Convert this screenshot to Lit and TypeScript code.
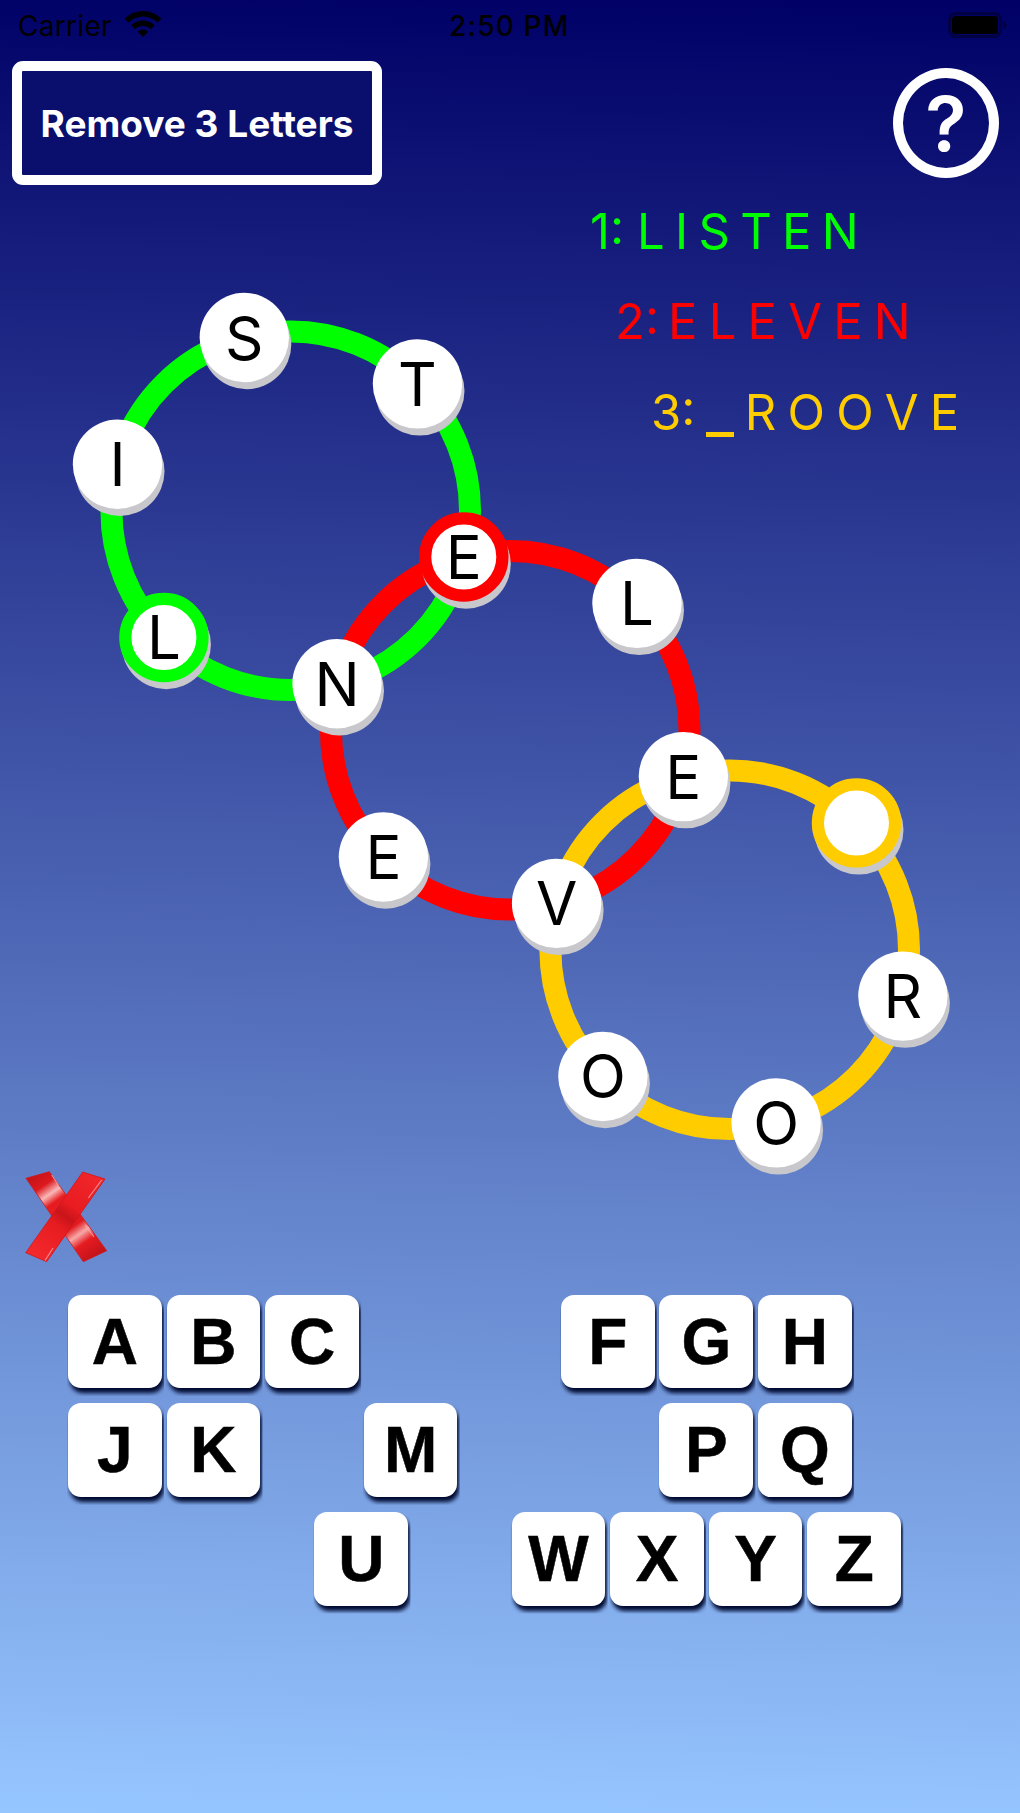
import { LitElement, html, css, svg } from "lit";
import { customElement } from "lit/decorators.js";

const R = 179.3;
type Ring = { cx: number; cy: number; color: string; letters: string[] };
const rings: Ring[] = [
  { cx: 290.7, cy: 510.7, color: "#00ff00", letters: ["S", "T", "", "", "L", "I"] },
  { cx: 510.2, cy: 730.2, color: "#ff0000", letters: ["E", "L", "E", "V", "E", "N"] },
  { cx: 729.7, cy: 949.7, color: "#ffcc00", letters: ["", "", "R", "O", "O", ""] },
];

type Node = { x: number; y: number; letter: string; ring?: string };
function pos(r: Ring, i: number) {
  const a = ((-15 + 60 * i) * Math.PI) / 180;
  return { x: r.cx + R * Math.sin(a), y: r.cy - R * Math.cos(a) };
}
const nodes: Node[] = [];
rings.forEach((r, ri) => {
  r.letters.forEach((l, i) => {
    if (l) nodes.push({ ...pos(r, i), letter: l, ring: ri === 0 && l === "L" ? "#00ff00" : ri === 1 && i === 0 ? "#ff0000" : undefined });
  });
});
nodes.push({ ...pos(rings[2], 1), letter: "", ring: "#ffcc00" });

function band(r1: number, r2: number) {
  const cx = 18, cy = 26, s = Math.SQRT1_2;
  const p = (r: number, d: number) => `${(cx + d * r * s).toFixed(2)} ${(cy - r * s).toFixed(2)}`;
  if (r2 === 0) return `M${cx} ${cy}L${p(r1, -1)}A${r1} ${r1} 0 0 1 ${p(r1, 1)}Z`;
  return `M${p(r1, -1)}A${r1} ${r1} 0 0 1 ${p(r1, 1)}L${p(r2, 1)}A${r2} ${r2} 0 0 0 ${p(r2, -1)}Z`;
}

const keyRows = [
  { cls: "", keys: ["A", "B", "C", "", "", "F", "G", "H"] },
  { cls: "", keys: ["J", "K", "", "M", "", "", "P", "Q"] },
  { cls: "half", keys: ["", "", "U", "", "W", "X", "Y", "Z"] },
];

const clues = [
  { cls: "c1", num: "1:", blank: false, text: "L I S T E N" },
  { cls: "c2", num: "2:", blank: false, text: "E L E V E N" },
  { cls: "c3", num: "3:", blank: true, text: "R O O V E" },
];

@customElement("app-root")
export class AppRoot extends LitElement {
  static styles = css`
    :host {
      display: block;
      width: 1020px;
      height: 1813px;
      overflow: hidden;
      background: linear-gradient(181deg, #000066 0%, #96c6ff 100%);
      font-family: Inter, "Liberation Sans", sans-serif;
    }
    .status {
      height: 61px;
      position: relative;
      display: flex;
      align-items: flex-start;
      justify-content: space-between;
      padding: 0 13px 0 18px;
      box-sizing: border-box;
      color: #000;
    }
    .status-left {
      display: flex;
      align-items: flex-start;
      gap: 13px;
      font-size: 28px;
      letter-spacing: 0.3px;
      line-height: 30px;
      padding-top: 11px;
    }
    .wifi {
      width: 36px;
      height: 26px;
      display: block;
    }
    .time {
      position: absolute;
      left: 449px;
      top: 11px;
      font-size: 28px;
      letter-spacing: 1.2px;
      line-height: 30px;
      font-weight: 500;
    }
    .battery {
      width: 59px;
      height: 26px;
      margin-top: 12px;
      display: block;
    }
    .head {
      display: flex;
      justify-content: space-between;
      align-items: flex-start;
      padding: 0 21px 0 12px;
      height: 123px;
    }
    .btn {
      width: 370px;
      height: 124px;
      box-sizing: border-box;
      border: 10px solid #fff;
      border-radius: 11px;
      display: flex;
      align-items: center;
      justify-content: center;
      color: #fff;
      font-size: 37px;
      font-weight: 700;
      white-space: nowrap;
      background: #0a0f6e;
    }
    .help {
      width: 106px;
      height: 110px;
      margin-top: 7px;
      box-sizing: border-box;
      border: 10px solid #fff;
      border-radius: 50%;
      display: flex;
      align-items: center;
      justify-content: center;
      color: #fff;
      font-size: 76px;
      font-weight: 600;
      line-height: 1;
    }
    .board {
      position: relative;
      height: 986px;
    }
    .graph {
      display: block;
      width: 1020px;
      height: 986px;
      overflow: visible;
    }
    .clues {
      position: absolute;
      left: 0;
      top: 2.5px;
      display: flex;
      flex-direction: column;
      font-size: 49px;
      line-height: 90.5px;
      white-space: pre;
      word-spacing: -2.6px;
    }
    .c1 { color: #00ff00; margin-left: 590px; word-spacing: -3.5px; }
    .c2 { color: #ff0000; margin-left: 615px; }
    .c3 { color: #ffcc00; margin-left: 651px; }
    .num { margin-right: 13px; }
    .c2 .num { margin-right: 9px; }
    .c3 .num { margin-right: 10.4px; }
    .blank {
      display: inline-block;
      width: 28px;
      height: 4.5px;
      margin-right: 11px;
      background: currentColor;
      vertical-align: -7px;
    }
    .xmark {
      display: block;
      width: 110px;
      height: 110px;
      margin-left: 10px;
      margin-top: -10px;
    }
    .keys {
      display: flex;
      flex-direction: column;
      gap: 15px;
      padding: 24.7px 0 0 68px;
    }
    .row {
      display: flex;
      gap: 4.9px;
    }
    .row.half {
      padding-left: 49.3px;
    }
    .tile, .gap {
      width: 93.7px;
      height: 93.8px;
      flex: none;
    }
    .tile {
      background: #fff;
      border-radius: 13px;
      box-shadow: 2px 5px 4px #000a30;
      clip-path: inset(-1px -2.3px -7.5px -1px);
      display: flex;
      align-items: center;
      justify-content: center;
      font-family: "Liberation Sans", Arial, sans-serif;
      font-weight: 700;
      font-size: 64px;
      -webkit-text-stroke: 0.5px #000;
      line-height: 1;
      color: #000;
    }
    .letter {
      font-family: Inter, "Liberation Sans", sans-serif;
      font-size: 60px;
      text-anchor: middle;
      fill: #000;
    }
  `;

  render() {
    return html`
      <div class="status">
        <div class="status-left">
          <span>Carrier</span>
          <svg class="wifi" viewBox="0 0 36 26">
            <path d=${band(26, 20.5)} fill="#000"></path>
            <path d=${band(16.5, 11)} fill="#000"></path>
            <path d=${band(7.5, 0)} fill="#000"></path>
          </svg>
        </div>
        <span class="time">2:50 PM</span>
        <svg class="battery" viewBox="0 0 59 26">
          <rect x="1.5" y="1.5" width="51" height="23" rx="6" fill="none" stroke="#000" stroke-opacity=".35" stroke-width="3"></rect>
          <rect x="4" y="4" width="46" height="18" rx="3.5" fill="#000"></rect>
          <path d="M55 8.5c2.2.6 3.6 2.4 3.6 4.5s-1.4 3.9-3.6 4.5z" fill="#000" fill-opacity=".4"></path>
        </svg>
      </div>

      <div class="head">
        <div class="btn">Remove 3 Letters</div>
        <div class="help">?</div>
      </div>

      <div class="board">
        <svg class="graph" viewBox="0 184 1020 986">
          ${rings.map(
            (r) => svg`<circle cx=${r.cx} cy=${r.cy} r=${R} fill="none" stroke=${r.color} stroke-width="22"></circle>`
          )}
          ${nodes.map(
            (n) => svg`
              <circle cx=${n.x + 2.3} cy=${n.y + 7} r="44.7" fill="#c7c7cc"></circle>
              ${n.ring
                ? svg`<circle cx=${n.x} cy=${n.y} r="38.6" fill="#fff" stroke=${n.ring} stroke-width="12.2"></circle>`
                : svg`<circle cx=${n.x} cy=${n.y} r="44.7" fill="#fff"></circle>`}
              <text class="letter" x=${n.x} y=${n.y + 22}>${n.letter}</text>
            `
          )}
        </svg>
        <div class="clues">
          ${clues.map(
            (c) => html`<div class=${c.cls}><span class="num">${c.num}</span>${c.blank ? html`<span class="blank"></span>` : ""}${c.text}</div>`
          )}
        </div>
      </div>

      <svg class="xmark" viewBox="10 1160 110 110">
        <defs>
          <linearGradient id="a1" gradientUnits="userSpaceOnUse" x1="38" y1="1175" x2="95" y2="1256">
            <stop offset="0" stop-color="#c8141a"></stop>
            <stop offset=".12" stop-color="#dc191e"></stop>
            <stop offset=".227" stop-color="#f9b8b8"></stop>
            <stop offset=".32" stop-color="#e61c21"></stop>
            <stop offset=".63" stop-color="#e01a1f"></stop>
            <stop offset=".73" stop-color="#f8a8a8"></stop>
            <stop offset=".83" stop-color="#e51b20"></stop>
            <stop offset="1" stop-color="#c4141a"></stop>
          </linearGradient>
          <linearGradient id="a2" gradientUnits="userSpaceOnUse" x1="94" y1="1175" x2="36" y2="1257">
            <stop offset="0" stop-color="#f0262a"></stop>
            <stop offset=".38" stop-color="#e81c21"></stop>
            <stop offset=".5" stop-color="#c9141a"></stop>
            <stop offset=".62" stop-color="#e61c21"></stop>
            <stop offset="1" stop-color="#f4292d"></stop>
          </linearGradient>
        </defs>
        <polygon points="26,1178.3 49.3,1171.7 106.7,1250.7 83.3,1261.7" fill="url(#a1)" stroke="#d0161c" stroke-width=".8"></polygon>
        <polygon points="82.7,1172 105,1179 46.7,1261.7 25.7,1252.7" fill="url(#a2)" stroke="#d0161c" stroke-width=".8"></polygon>
        <g stroke="#f9b0b0" stroke-opacity=".75" stroke-width="1.1" fill="none">
          <path d="M51.7 1175L58.3 1185"></path>
          <path d="M101.7 1180L88.3 1198"></path>
          <path d="M45 1260.5L53 1248"></path>
          <path d="M85 1225L94 1237"></path>
        </g>
      </svg>

      <div class="keys">
        ${keyRows.map(
          (row) => html`<div class="row ${row.cls}">
            ${row.keys.map((k) => (k ? html`<div class="tile">${k}</div>` : html`<div class="gap"></div>`))}
          </div>`
        )}
      </div>
    `;
  }
}
